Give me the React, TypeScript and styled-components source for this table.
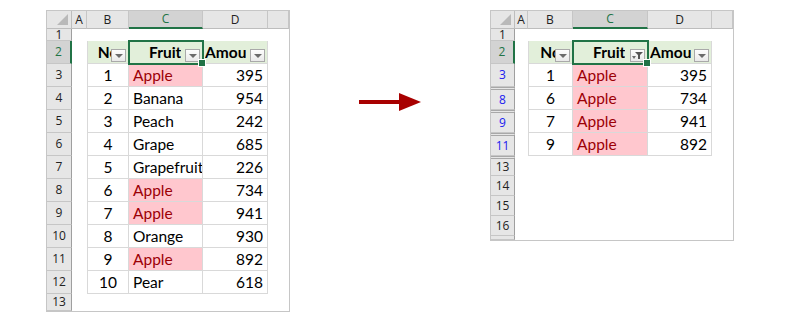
import styled, { createGlobalStyle, css } from "styled-components";

const GlobalStyle = createGlobalStyle`
    * {
        box-sizing: border-box;
    }
    body {
        margin: 0;
        background: #ffffff;
        font-family: "Lato", "Liberation Sans", sans-serif;
    }
`;

const GREEN = "#217346";

const Page = styled.div`
    display: flex;
    align-items: flex-start;
    width: 800px;
    height: 323px;
    padding: 10px 0 0 46px;
`;

const ArrowZone = styled.div`
    width: 200px;
    display: flex;
    justify-content: center;
    padding-top: 82px;
`;

const Sheet = styled.div<{ $cols: string; $rows: string }>`
    display: grid;
    grid-template-columns: ${(p) => p.$cols};
    grid-template-rows: ${(p) => p.$rows};
    border: 1px solid #c6c6c6;
    background: #ffffff;
`;

const Corner = styled.div`
    position: relative;
    background: #e6e6e6;
    border-right: 1px solid #bdbdbd;
    border-bottom: 1px solid #bdbdbd;

    &::after {
        content: "";
        position: absolute;
        right: 3px;
        bottom: 3px;
        border-left: 11px solid transparent;
        border-bottom: 11px solid #b9b9b9;
    }
`;

const ColHead = styled.div<{ $selected?: boolean }>`
    display: flex;
    align-items: center;
    justify-content: center;
    background: ${(p) => (p.$selected ? "#d3d3d3" : "#e6e6e6")};
    border-right: 1px solid #c6c6c6;
    border-bottom: ${(p) => (p.$selected ? `2px solid ${GREEN}` : "1px solid #bdbdbd")};
    color: ${(p) => (p.$selected ? GREEN : "#222222")};
    font-family: "Open Sans", "Liberation Sans", sans-serif;
    font-size: 12px;
    line-height: 1;
    overflow: hidden;
`;

const RowHead = styled.div<{ $selected?: boolean; $filtered?: boolean; $gap?: boolean }>`
    display: flex;
    align-items: center;
    justify-content: center;
    background: ${(p) => (p.$selected ? "#d3d3d3" : "#e6e6e6")};
    border-bottom: 1px solid #c6c6c6;
    border-right: ${(p) => (p.$selected ? `2px solid ${GREEN}` : "1px solid #9f9f9f")};
    color: ${(p) => (p.$selected ? GREEN : p.$filtered ? "#2020f0" : "#222222")};
    font-family: "Open Sans", "Liberation Sans", sans-serif;
    font-size: 12px;
    line-height: 1;
    overflow: hidden;
    ${(p) =>
        p.$gap &&
        css`
            border-top: 3px double #a8a8a8;
        `}
`;

const Blank = styled.div`
    background: #ffffff;
`;

const Cell = styled.div<{
    $align?: "left" | "center" | "right";
    $head?: boolean;
    $hit?: boolean;
    $first?: boolean;
    $active?: boolean;
}>`
    position: relative;
    display: flex;
    align-items: center;
    justify-content: ${(p) =>
        p.$align === "right" ? "flex-end" : p.$align === "center" ? "center" : "flex-start"};
    padding: 0 4px;
    border-right: 1px solid #d9d9d9;
    border-bottom: 1px solid #d9d9d9;
    border-left: ${(p) => (p.$first ? "1px solid #d9d9d9" : "none")};
    background: ${(p) => (p.$head ? "#e2efda" : p.$hit ? "#ffc7ce" : "#ffffff")};
    color: ${(p) => (p.$hit ? "#9c0006" : "#000000")};
    font-size: 15.5px;
    font-weight: ${(p) => (p.$head ? 700 : 400)};
    white-space: nowrap;
    overflow: ${(p) => (p.$active ? "visible" : "hidden")};
    ${(p) =>
        p.$active &&
        css`
            z-index: 2;
            outline: 2px solid ${GREEN};
            outline-offset: -1px;

            &::after {
                content: "";
                position: absolute;
                right: -4px;
                bottom: -4px;
                width: 6px;
                height: 6px;
                background: ${GREEN};
                border: 1px solid #ffffff;
            }
        `}
`;

const HeadText = styled.span<{ $indent?: number }>`
    overflow: hidden;
    padding-left: ${(p) => p.$indent ?? 0}px;
`;

const DropButton = styled.span`
    position: absolute;
    right: 2px;
    top: 8px;
    width: 15px;
    height: 13px;
    display: flex;
    align-items: center;
    justify-content: center;
    border: 1px solid #a9a9a9;
    background: linear-gradient(#fdfdfd, #e9e9e9);
`;

const ArrowDown = styled.span`
    width: 0;
    height: 0;
    border-left: 4px solid transparent;
    border-right: 4px solid transparent;
    border-top: 4px solid #6b6b6b;
    margin-top: 1px;
`;

function FilterIcon() {
    return (
        <svg width="13" height="9" viewBox="0 0 13 9">
            <path d="M1 5 L5 5 L3 8 Z" fill="#6b6b6b" />
            <path d="M4 1 L12 1 L9 4 L9 8 L7 8 L7 4 Z" fill="#555555" />
        </svg>
    );
}

function Dropdown({ filtered }: { filtered?: boolean }) {
    return <DropButton>{filtered ? <FilterIcon /> : <ArrowDown />}</DropButton>;
}

function Arrow() {
    return (
        <svg width="62" height="20" viewBox="0 0 62 20">
            <rect x="0" y="8" width="42" height="4" fill="#a80000" />
            <path d="M40 1 L62 10 L40 19 Z" fill="#a80000" />
        </svg>
    );
}

type DataRow = { label: number; no: number; fruit: string; amount: number; gap?: boolean };

type SheetProps = {
    cols: string;
    rowHeights: number[];
    data: DataRow[];
    trailing: (number | null)[];
    filtered?: boolean;
};

function Spreadsheet({ cols, rowHeights, data, trailing, filtered }: SheetProps) {
    return (
        <Sheet $cols={cols} $rows={rowHeights.map((h) => `${h}px`).join(" ")}>
            <Corner />
            <ColHead>A</ColHead>
            <ColHead>B</ColHead>
            <ColHead $selected>C</ColHead>
            <ColHead>D</ColHead>
            <ColHead />

            <RowHead>1</RowHead>
            <Blank />
            <Blank />
            <Blank />
            <Blank />
            <Blank />

            <RowHead $selected>2</RowHead>
            <Blank />
            <Cell $head $first $align="center">
                <HeadText>No</HeadText>
                <Dropdown />
            </Cell>
            <Cell $head $active $align="left">
                <HeadText $indent={16}>Fruit</HeadText>
                <Dropdown filtered={filtered} />
            </Cell>
            <Cell $head $align="left" style={{ paddingLeft: 2 }}>
                <HeadText>Amou</HeadText>
                <Dropdown />
            </Cell>
            <Blank />

            {data.map((row) => {
                const hit = row.fruit === "Apple";
                return [
                    <RowHead key={`h${row.label}`} $filtered={filtered} $gap={row.gap}>
                        {row.label}
                    </RowHead>,
                    <Blank key={`a${row.label}`} />,
                    <Cell key={`b${row.label}`} $first $align="center">
                        {row.no}
                    </Cell>,
                    <Cell key={`c${row.label}`} $hit={hit}>
                        {row.fruit}
                    </Cell>,
                    <Cell key={`d${row.label}`} $align="right">
                        {row.amount}
                    </Cell>,
                    <Blank key={`e${row.label}`} />
                ];
            })}

            {trailing.map((label, i) => [
                <RowHead key={`th${i}`} $gap={filtered && i === 0}>
                    {label}
                </RowHead>,
                <Blank key={`ta${i}`} />,
                <Blank key={`tb${i}`} />,
                <Blank key={`tc${i}`} />,
                <Blank key={`td${i}`} />,
                <Blank key={`te${i}`} />
            ])}
        </Sheet>
    );
}

const allRows: DataRow[] = [
    { label: 3, no: 1, fruit: "Apple", amount: 395 },
    { label: 4, no: 2, fruit: "Banana", amount: 954 },
    { label: 5, no: 3, fruit: "Peach", amount: 242 },
    { label: 6, no: 4, fruit: "Grape", amount: 685 },
    { label: 7, no: 5, fruit: "Grapefruit", amount: 226 },
    { label: 8, no: 6, fruit: "Apple", amount: 734 },
    { label: 9, no: 7, fruit: "Apple", amount: 941 },
    { label: 10, no: 8, fruit: "Orange", amount: 930 },
    { label: 11, no: 9, fruit: "Apple", amount: 892 },
    { label: 12, no: 10, fruit: "Pear", amount: 618 }
];

const filteredRows: DataRow[] = allRows
    .filter((r) => r.fruit === "Apple")
    .map((r, i) => ({ ...r, gap: i > 0 }));

export default function App() {
    return (
        <>
            <GlobalStyle />
            <Page>
                <Spreadsheet
                    cols="25px 15px 42px 74px 65px 21px"
                    rowHeights={[18, 12, 23, 23, 23, 23, 23, 23, 23, 23, 23, 23, 23, 17]}
                    data={allRows}
                    trailing={[13]}
                />
                <ArrowZone>
                    <Arrow />
                </ArrowZone>
                <Spreadsheet
                    cols="24px 13px 45px 75px 64px 21px"
                    rowHeights={[18, 12, 23, 23, 23, 23, 23, 20, 20, 20, 20, 4]}
                    data={filteredRows}
                    trailing={[13, 14, 15, 16, null]}
                    filtered
                />
            </Page>
        </>
    );
}
